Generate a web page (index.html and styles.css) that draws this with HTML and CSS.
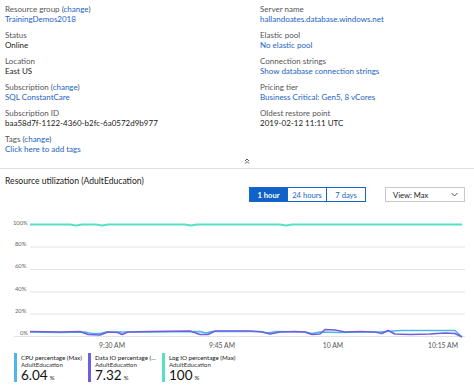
FILE: index.html
```html
<!DOCTYPE html>
<html lang="en">
<head>
    <meta charset="UTF-8">
    <link rel="stylesheet" href="styles.css">
    <title>AdultEducation - Overview</title>
</head>
<body>

<div class="props">
    <div class="col">
        <div class="prop"><div class="label">Resource group (<a>change</a>)</div><a class="value">TrainingDemos2018</a></div>
        <div class="prop"><div class="label">Status</div><div class="value">Online</div></div>
        <div class="prop"><div class="label">Location</div><div class="value">East US</div></div>
        <div class="prop"><div class="label">Subscription (<a>change</a>)</div><a class="value">SQL ConstantCare</a></div>
        <div class="prop"><div class="label">Subscription ID</div><div class="value">baa58d7f-1122-4360-b2fc-6a0572d9b977</div></div>
        <div class="prop tags"><div class="label">Tags (<a>change</a>)</div><a class="value">Click here to add tags</a></div>
    </div>
    <div class="col">
        <div class="prop"><div class="label">Server name</div><a class="value">hallandoates.database.windows.net</a></div>
        <div class="prop"><div class="label">Elastic pool</div><a class="value">No elastic pool</a></div>
        <div class="prop"><div class="label">Connection strings</div><a class="value">Show database connection strings</a></div>
        <div class="prop"><div class="label">Pricing tier</div><a class="value">Business Critical: Gen5, 8 vCores</a></div>
        <div class="prop"><div class="label">Oldest restore point</div><div class="value">2019-02-12 11:11 UTC</div></div>
    </div>
</div>

<div class="collapse">
    <svg width="6" height="6" viewBox="0 0 6 6"><path d="M1 3 L3 1 L5 3 M1 5.5 L3 3.5 L5 5.5" fill="none" stroke="#444" stroke-width="0.9"/></svg>
</div>

<div class="usage">
    <div class="usage-title">Resource utilization (AdultEducation)</div>
    <div class="toolbar">
        <div class="ranges">
            <button class="range active">1 hour</button>
            <button class="range">24 hours</button>
            <button class="range">7 days</button>
        </div>
        <div class="select">
            <span>View: Max</span>
            <svg width="7" height="5" viewBox="0 0 7 5"><path d="M0.5 1 L3.5 4 L6.5 1" fill="none" stroke="#444" stroke-width="0.9"/></svg>
        </div>
    </div>

    <svg class="chart" width="474" height="142" viewBox="0 0 474 142">
        <g class="grid">
            <line x1="30" y1="37" x2="465" y2="37"/>
            <line x1="30" y1="59.5" x2="465" y2="59.5"/>
            <line x1="30" y1="82" x2="465" y2="82"/>
            <line x1="30" y1="104" x2="465" y2="104"/>
            <line x1="14" y1="126.5" x2="465" y2="126.5"/>
        </g>
        <g class="ylabels">
            <text x="13" y="15">100%</text>
            <text x="15" y="36">80%</text>
            <text x="15" y="58">60%</text>
            <text x="15" y="80.5">40%</text>
            <text x="15" y="102.5">20%</text>
            <text x="20" y="125">0%</text>
        </g>
        <polyline class="log" points="30,14.5 70,14.5 76,15.5 82,14.5 96,14.5 102,15.5 108,14.5 185,14.5 191,15.5 197,14.5 280,14.5 286,15.5 292,14.5 462,14.5"/>
        <polyline class="cpu" points="30,122 60,122.5 85,122 92,123.5 100,123.5 106,122 150,122 200,121.5 206,123 212,121.5 260,121.5 268,123 276,121.5 305,122 312,123.5 320,122 340,122.5 360,122 380,122 386,121.5 400,120.5 440,120.5 455,120.5 462,127"/>
        <polyline class="data" points="30,121.5 60,122 80,121.5 88,124.5 100,125 108,122 118,122.5 122,124.5 128,122 150,121.5 190,121 200,124.5 208,124.5 215,121 250,121 262,122 270,124 280,122 295,121.5 305,122 312,124.5 320,124 325,119.5 335,120 345,122 360,121.5 375,122 382,123.5 388,120.5 395,124 410,124.5 430,124 445,123 455,123.5 462,127"/>
        <g class="xlabels">
            <text x="112" y="137.5">9:30 AM</text>
            <text x="222" y="137.5">9:45 AM</text>
            <text x="333" y="137.5">10 AM</text>
            <text x="443" y="137.5">10:15 AM</text>
        </g>
    </svg>

    <div class="legend">
        <div class="series cpu-series">
            <div class="series-name">CPU percentage (Max)</div>
            <div class="series-db">AdultEducation</div>
            <div class="series-value">6.04<span>%</span></div>
        </div>
        <div class="series data-series">
            <div class="series-name">Data IO percentage (...</div>
            <div class="series-db">AdultEducation</div>
            <div class="series-value">7.32<span>%</span></div>
        </div>
        <div class="series log-series">
            <div class="series-name">Log IO percentage (Max)</div>
            <div class="series-db">AdultEducation</div>
            <div class="series-value">100<span>%</span></div>
        </div>
    </div>
</div>

</body>
</html>
```

FILE: styles.css
```css
body {
    margin: 0;
    padding: 0;
    font-family: 'Lato', sans-serif;
    font-size: 8px;
    color: #222;
    background: #fff;
    width: 474px;
    height: 391px;
    overflow: hidden;
}

a {
    color: #1b63c6;
    cursor: pointer;
}

/* Essentials block */
.props {
    display: grid;
    grid-template-columns: 255px 1fr;
    padding: 4px 5px 0;
}

.prop {
    display: flex;
    flex-direction: column;
    margin-bottom: 6px;
}

.prop .label,
.prop .value {
    line-height: 10px;
    height: 10px;
    white-space: nowrap;
}

.prop .label {
    color: #555;
}

.prop.tags {
    margin-top: 3px;
    margin-bottom: 0;
}

.collapse {
    height: 15px;
    display: flex;
    align-items: center;
    justify-content: center;
    border-bottom: 1px solid #e1e1e1;
    margin-top: -1px;
}

.collapse svg {
    margin-left: 20px;
}

/* Resource utilization */
.usage-title {
    font-size: 8.6px;
    line-height: 12px;
    padding: 6px 5px 0;
}

.toolbar {
    display: flex;
    justify-content: flex-end;
    padding-right: 9px;
    gap: 19px;
}

.ranges {
    display: flex;
}

.range {
    font-family: inherit;
    font-size: 7.6px;
    height: 15px;
    padding: 0;
    width: 39px;
    border: 1px solid #1b63c6;
    border-left: none;
    background: #fff;
    color: #1b63c6;
}

.range:first-child {
    border-left: 1px solid #1b63c6;
}

.range.active {
    background: #0f62c7;
    color: #fff;
    font-weight: bold;
}

.select {
    width: 80px;
    height: 15px;
    box-sizing: border-box;
    border: 1px solid #c8c8c8;
    display: flex;
    align-items: center;
    justify-content: space-between;
    padding: 0 6px 0 7px;
    font-size: 7.6px;
}

.chart {
    display: block;
    margin-top: 8px;
}

.grid line {
    stroke: #e3e3e3;
    stroke-width: 1;
}

.ylabels text {
    font-size: 5.8px;
    fill: #666;
}

.xlabels text {
    font-size: 6.8px;
    fill: #555;
    text-anchor: middle;
}

.chart polyline {
    fill: none;
    stroke-width: 1.6;
    stroke-linejoin: round;
}

.chart .log {
    stroke: #56e0c4;
    stroke-width: 1.8;
}

.chart .cpu {
    stroke: #4fb6e9;
}

.chart .data {
    stroke: #6d5ee3;
}

/* Legend */
.legend {
    display: flex;
    padding-left: 14px;
    margin-top: 1px;
}

.series {
    width: 74px;
    border-left: 3px solid;
    padding-left: 4px;
    box-sizing: border-box;
    height: 29px;
}

.cpu-series { border-color: #4fb6e9; }
.data-series { border-color: #6d5ee3; }
.log-series { border-color: #56e0c4; }

.series-name {
    font-size: 6.2px;
    line-height: 6.5px;
    padding-top: 2px;
    white-space: nowrap;
    color: #111;
}

.series-db {
    font-size: 6.2px;
    line-height: 6.5px;
    color: #333;
}

.series-value {
    font-size: 13.5px;
    line-height: 15px;
    color: #111;
}

.series-value span {
    font-size: 6px;
    margin-left: 2px;
}
```
